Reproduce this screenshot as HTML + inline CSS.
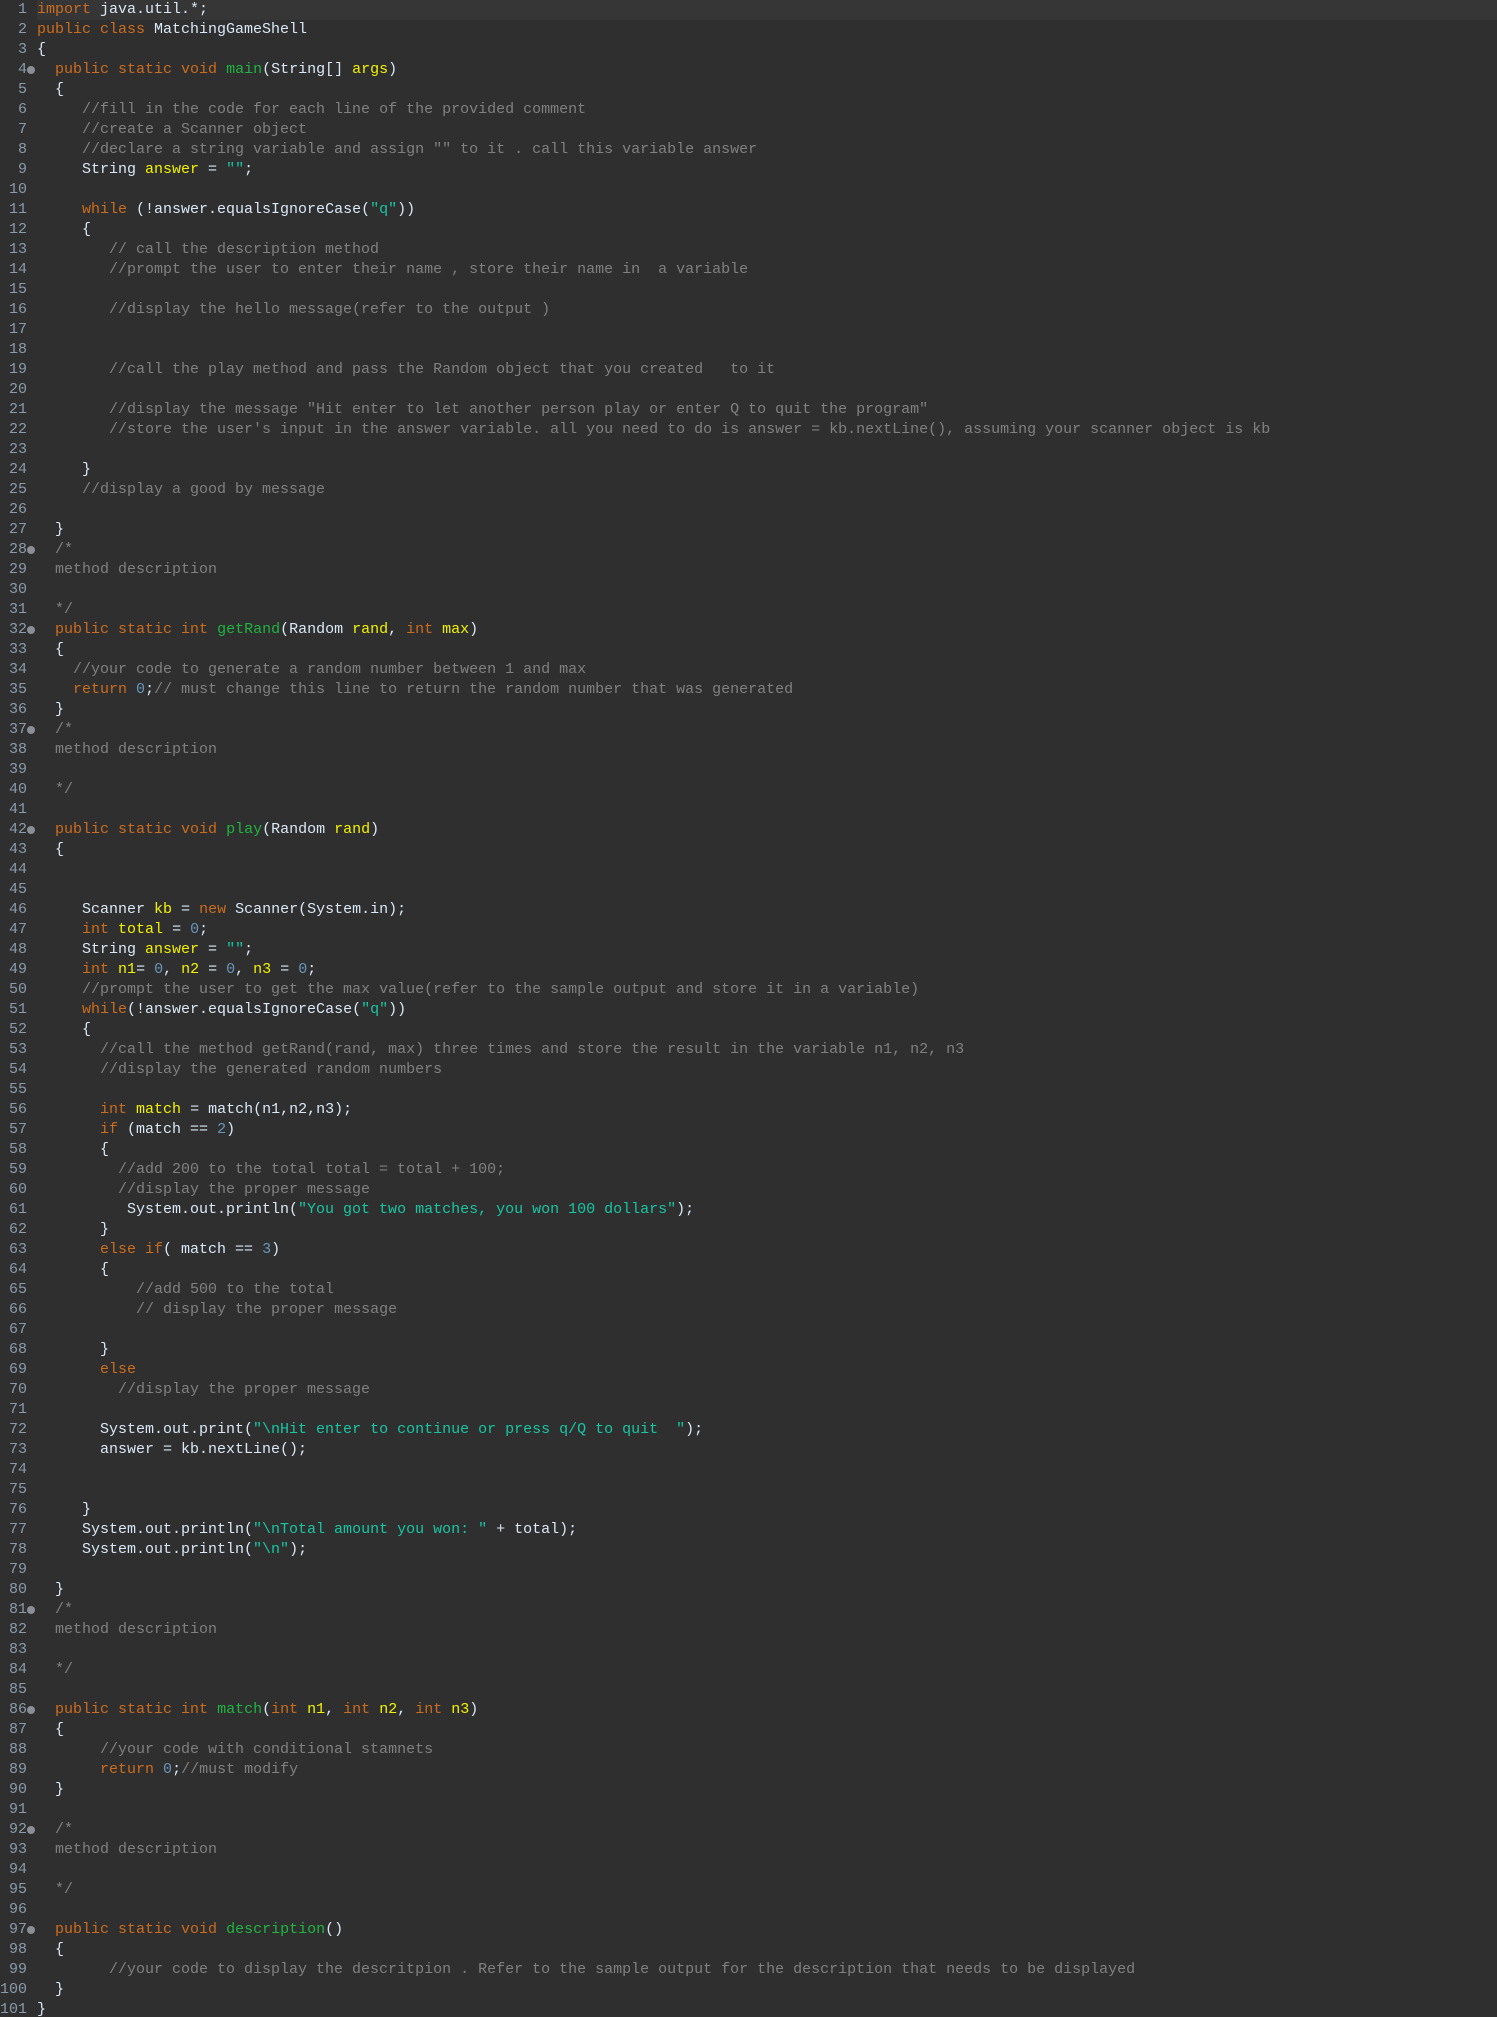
<!DOCTYPE html>
<html><head><meta charset="utf-8"><style>
html,body{margin:0;padding:0;background:#2f2f2f;width:1497px;height:2017px;overflow:hidden}
#w{position:relative;font-family:"Liberation Mono",monospace;font-size:15px;line-height:20px;color:#d9e8f7}
.l{position:relative;height:20px;white-space:pre}
.n{position:absolute;left:0;width:27px;text-align:right;color:#8a9bab}
.f{position:absolute;left:27px;top:6px;width:8px;height:8px;border-radius:50%;background:#8a8f96}
.t{position:absolute;left:37px}
.hl{position:absolute;left:37px;right:0;top:0;height:20px;background:#363636}
.k{color:#cc6c1d}.s{color:#17c6a3}.c{color:#808080}.v{color:#f2f200}.m{color:#1eb540}.d{color:#6897bb}
</style></head><body><div id="w">
<div class="l"><div class="hl"></div><span class="n">1</span><span class="t"><span class="k">import</span> java.util.*;</span></div>
<div class="l"><span class="n">2</span><span class="t"><span class="k">public class</span> MatchingGameShell</span></div>
<div class="l"><span class="n">3</span><span class="t">{</span></div>
<div class="l"><span class="n">4</span><span class="f"></span><span class="t">  <span class="k">public static void</span> <span class="m">main</span>(String[] <span class="v">args</span>)</span></div>
<div class="l"><span class="n">5</span><span class="t">  {</span></div>
<div class="l"><span class="n">6</span><span class="t">     <span class="c">//fill in the code for each line of the provided comment</span></span></div>
<div class="l"><span class="n">7</span><span class="t">     <span class="c">//create a Scanner object</span></span></div>
<div class="l"><span class="n">8</span><span class="t">     <span class="c">//declare a string variable and assign "" to it . call this variable answer</span></span></div>
<div class="l"><span class="n">9</span><span class="t">     String <span class="v">answer</span> = <span class="s">""</span>;</span></div>
<div class="l"><span class="n">10</span></div>
<div class="l"><span class="n">11</span><span class="t">     <span class="k">while</span> (!answer.equalsIgnoreCase(<span class="s">"q"</span>))</span></div>
<div class="l"><span class="n">12</span><span class="t">     {</span></div>
<div class="l"><span class="n">13</span><span class="t">        <span class="c">// call the description method</span></span></div>
<div class="l"><span class="n">14</span><span class="t">        <span class="c">//prompt the user to enter their name , store their name in  a variable</span></span></div>
<div class="l"><span class="n">15</span></div>
<div class="l"><span class="n">16</span><span class="t">        <span class="c">//display the hello message(refer to the output )</span></span></div>
<div class="l"><span class="n">17</span></div>
<div class="l"><span class="n">18</span></div>
<div class="l"><span class="n">19</span><span class="t">        <span class="c">//call the play method and pass the Random object that you created   to it</span></span></div>
<div class="l"><span class="n">20</span></div>
<div class="l"><span class="n">21</span><span class="t">        <span class="c">//display the message "Hit enter to let another person play or enter Q to quit the program"</span></span></div>
<div class="l"><span class="n">22</span><span class="t">        <span class="c">//store the user's input in the answer variable. all you need to do is answer = kb.nextLine(), assuming your scanner object is kb</span></span></div>
<div class="l"><span class="n">23</span></div>
<div class="l"><span class="n">24</span><span class="t">     }</span></div>
<div class="l"><span class="n">25</span><span class="t">     <span class="c">//display a good by message</span></span></div>
<div class="l"><span class="n">26</span></div>
<div class="l"><span class="n">27</span><span class="t">  }</span></div>
<div class="l"><span class="n">28</span><span class="f"></span><span class="t">  <span class="c">/*</span></span></div>
<div class="l"><span class="n">29</span><span class="t">  <span class="c">method description</span></span></div>
<div class="l"><span class="n">30</span></div>
<div class="l"><span class="n">31</span><span class="t">  <span class="c">*/</span></span></div>
<div class="l"><span class="n">32</span><span class="f"></span><span class="t">  <span class="k">public static int</span> <span class="m">getRand</span>(Random <span class="v">rand</span>, <span class="k">int</span> <span class="v">max</span>)</span></div>
<div class="l"><span class="n">33</span><span class="t">  {</span></div>
<div class="l"><span class="n">34</span><span class="t">    <span class="c">//your code to generate a random number between 1 and max</span></span></div>
<div class="l"><span class="n">35</span><span class="t">    <span class="k">return</span> <span class="d">0</span>;<span class="c">// must change this line to return the random number that was generated</span></span></div>
<div class="l"><span class="n">36</span><span class="t">  }</span></div>
<div class="l"><span class="n">37</span><span class="f"></span><span class="t">  <span class="c">/*</span></span></div>
<div class="l"><span class="n">38</span><span class="t">  <span class="c">method description</span></span></div>
<div class="l"><span class="n">39</span></div>
<div class="l"><span class="n">40</span><span class="t">  <span class="c">*/</span></span></div>
<div class="l"><span class="n">41</span></div>
<div class="l"><span class="n">42</span><span class="f"></span><span class="t">  <span class="k">public static void</span> <span class="m">play</span>(Random <span class="v">rand</span>)</span></div>
<div class="l"><span class="n">43</span><span class="t">  {</span></div>
<div class="l"><span class="n">44</span></div>
<div class="l"><span class="n">45</span></div>
<div class="l"><span class="n">46</span><span class="t">     Scanner <span class="v">kb</span> = <span class="k">new</span> Scanner(System.in);</span></div>
<div class="l"><span class="n">47</span><span class="t">     <span class="k">int</span> <span class="v">total</span> = <span class="d">0</span>;</span></div>
<div class="l"><span class="n">48</span><span class="t">     String <span class="v">answer</span> = <span class="s">""</span>;</span></div>
<div class="l"><span class="n">49</span><span class="t">     <span class="k">int</span> <span class="v">n1</span>= <span class="d">0</span>, <span class="v">n2</span> = <span class="d">0</span>, <span class="v">n3</span> = <span class="d">0</span>;</span></div>
<div class="l"><span class="n">50</span><span class="t">     <span class="c">//prompt the user to get the max value(refer to the sample output and store it in a variable)</span></span></div>
<div class="l"><span class="n">51</span><span class="t">     <span class="k">while</span>(!answer.equalsIgnoreCase(<span class="s">"q"</span>))</span></div>
<div class="l"><span class="n">52</span><span class="t">     {</span></div>
<div class="l"><span class="n">53</span><span class="t">       <span class="c">//call the method getRand(rand, max) three times and store the result in the variable n1, n2, n3</span></span></div>
<div class="l"><span class="n">54</span><span class="t">       <span class="c">//display the generated random numbers</span></span></div>
<div class="l"><span class="n">55</span></div>
<div class="l"><span class="n">56</span><span class="t">       <span class="k">int</span> <span class="v">match</span> = match(n1,n2,n3);</span></div>
<div class="l"><span class="n">57</span><span class="t">       <span class="k">if</span> (match == <span class="d">2</span>)</span></div>
<div class="l"><span class="n">58</span><span class="t">       {</span></div>
<div class="l"><span class="n">59</span><span class="t">         <span class="c">//add 200 to the total total = total + 100;</span></span></div>
<div class="l"><span class="n">60</span><span class="t">         <span class="c">//display the proper message</span></span></div>
<div class="l"><span class="n">61</span><span class="t">          System.out.println(<span class="s">"You got two matches, you won 100 dollars"</span>);</span></div>
<div class="l"><span class="n">62</span><span class="t">       }</span></div>
<div class="l"><span class="n">63</span><span class="t">       <span class="k">else if</span>( match == <span class="d">3</span>)</span></div>
<div class="l"><span class="n">64</span><span class="t">       {</span></div>
<div class="l"><span class="n">65</span><span class="t">           <span class="c">//add 500 to the total</span></span></div>
<div class="l"><span class="n">66</span><span class="t">           <span class="c">// display the proper message</span></span></div>
<div class="l"><span class="n">67</span></div>
<div class="l"><span class="n">68</span><span class="t">       }</span></div>
<div class="l"><span class="n">69</span><span class="t">       <span class="k">else</span></span></div>
<div class="l"><span class="n">70</span><span class="t">         <span class="c">//display the proper message</span></span></div>
<div class="l"><span class="n">71</span></div>
<div class="l"><span class="n">72</span><span class="t">       System.out.print(<span class="s">"\nHit enter to continue or press q/Q to quit  "</span>);</span></div>
<div class="l"><span class="n">73</span><span class="t">       answer = kb.nextLine();</span></div>
<div class="l"><span class="n">74</span></div>
<div class="l"><span class="n">75</span></div>
<div class="l"><span class="n">76</span><span class="t">     }</span></div>
<div class="l"><span class="n">77</span><span class="t">     System.out.println(<span class="s">"\nTotal amount you won: "</span> + total);</span></div>
<div class="l"><span class="n">78</span><span class="t">     System.out.println(<span class="s">"\n"</span>);</span></div>
<div class="l"><span class="n">79</span></div>
<div class="l"><span class="n">80</span><span class="t">  }</span></div>
<div class="l"><span class="n">81</span><span class="f"></span><span class="t">  <span class="c">/*</span></span></div>
<div class="l"><span class="n">82</span><span class="t">  <span class="c">method description</span></span></div>
<div class="l"><span class="n">83</span></div>
<div class="l"><span class="n">84</span><span class="t">  <span class="c">*/</span></span></div>
<div class="l"><span class="n">85</span></div>
<div class="l"><span class="n">86</span><span class="f"></span><span class="t">  <span class="k">public static int</span> <span class="m">match</span>(<span class="k">int</span> <span class="v">n1</span>, <span class="k">int</span> <span class="v">n2</span>, <span class="k">int</span> <span class="v">n3</span>)</span></div>
<div class="l"><span class="n">87</span><span class="t">  {</span></div>
<div class="l"><span class="n">88</span><span class="t">       <span class="c">//your code with conditional stamnets</span></span></div>
<div class="l"><span class="n">89</span><span class="t">       <span class="k">return</span> <span class="d">0</span>;<span class="c">//must modify</span></span></div>
<div class="l"><span class="n">90</span><span class="t">  }</span></div>
<div class="l"><span class="n">91</span></div>
<div class="l"><span class="n">92</span><span class="f"></span><span class="t">  <span class="c">/*</span></span></div>
<div class="l"><span class="n">93</span><span class="t">  <span class="c">method description</span></span></div>
<div class="l"><span class="n">94</span></div>
<div class="l"><span class="n">95</span><span class="t">  <span class="c">*/</span></span></div>
<div class="l"><span class="n">96</span></div>
<div class="l"><span class="n">97</span><span class="f"></span><span class="t">  <span class="k">public static void</span> <span class="m">description</span>()</span></div>
<div class="l"><span class="n">98</span><span class="t">  {</span></div>
<div class="l"><span class="n">99</span><span class="t">        <span class="c">//your code to display the descritpion . Refer to the sample output for the description that needs to be displayed</span></span></div>
<div class="l"><span class="n">100</span><span class="t">  }</span></div>
<div class="l"><span class="n">101</span><span class="t">}</span></div>
</div></body></html>
